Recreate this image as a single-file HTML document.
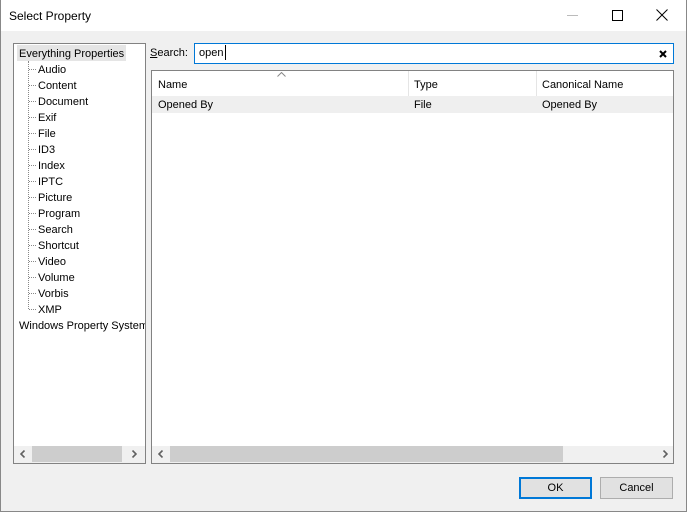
<!DOCTYPE html><html><head><style>
*{margin:0;padding:0;box-sizing:border-box}
body{width:687px;height:512px;background:#f0f0f0;font-family:"Liberation Sans",sans-serif;font-size:11px;color:#000;position:relative;overflow:hidden}
.a{position:absolute;white-space:nowrap}
.t{line-height:16px}
</style></head><body>
<div class="a" style="left:0;top:0;width:687px;height:31px;background:#fff"></div>
<div class="a" style="left:0;top:0;width:1px;height:512px;background:#888"></div>
<div class="a" style="left:686px;top:0;width:1px;height:512px;background:#888"></div>
<div class="a" style="left:0;top:511px;width:687px;height:1px;background:#888"></div>
<div class="a" style="left:9px;top:9px;font-size:12px">Select Property</div>
<div class="a" style="left:567px;top:15px;width:11px;height:1px;background:#bbb"></div>
<div class="a" style="left:612px;top:10px;width:11px;height:11px;border:1px solid #000"></div>
<svg class="a" style="left:656px;top:9px" width="12" height="12"><path d="M0.5 0.5L11.5 11.5M11.5 0.5L0.5 11.5" stroke="#000" stroke-width="1"/></svg>

<div class="a" style="left:13px;top:43px;width:133px;height:421px;background:#fff;border:1px solid #828282"></div>
<div class="a" style="left:17px;top:45px;width:109px;height:16px;background:#e5e5e5"></div>
<div class="a t" style="left:19px;top:46px">Everything Properties</div>
<div class="a" style="left:28px;top:61px;width:0;height:248px;border-left:1px dotted #888"></div>
<div id="tree"></div>
<div class="a t" style="left:19px;top:318px;width:126px;overflow:hidden">Windows Property System</div>
<div class="a" style="left:14px;top:446px;width:131px;height:17px;background:#f0f0f0"></div>
<div class="a" style="left:32px;top:446px;width:90px;height:16px;background:#cdcdcd"></div>
<svg class="a" style="left:20px;top:450px" width="6" height="8"><path d="M4.5 0.5L1 4L4.5 7.5" stroke="#606060" stroke-width="1.6" fill="none"/></svg>
<svg class="a" style="left:131px;top:450px" width="6" height="8"><path d="M1.5 0.5L5 4L1.5 7.5" stroke="#606060" stroke-width="1.6" fill="none"/></svg>

<div class="a" style="left:150px;top:47px"><u>S</u>earch:</div>
<div class="a" style="left:194px;top:43px;width:480px;height:21px;background:#fff;border:1px solid #0078d7"></div>
<div class="a" style="left:199px;top:47px">open</div>
<div class="a" style="left:225px;top:45px;width:1px;height:15px;background:#000"></div>
<svg class="a" style="left:659px;top:50px" width="8" height="8"><path d="M1 1L7 7M7 1L1 7" stroke="#000" stroke-width="2"/></svg>

<div class="a" style="left:151px;top:70px;width:523px;height:394px;background:#fff;border:1px solid #828282"></div>
<div class="a" style="left:408px;top:71px;width:1px;height:25px;background:#e5e5e5"></div>
<div class="a" style="left:536px;top:71px;width:1px;height:25px;background:#e5e5e5"></div>
<svg class="a" style="left:277px;top:72px" width="9" height="5"><path d="M0.5 4.5L4.5 0.5L8.5 4.5" stroke="#888" fill="none"/></svg>
<div class="a" style="left:158px;top:79px">Name</div>
<div class="a" style="left:414px;top:79px">Type</div>
<div class="a" style="left:542px;top:79px">Canonical Name</div>
<div class="a" style="left:152px;top:96px;width:521px;height:17px;background:#efefef"></div>
<div class="a" style="left:158px;top:99px">Opened By</div>
<div class="a" style="left:414px;top:99px">File</div>
<div class="a" style="left:542px;top:99px">Opened By</div>
<div class="a" style="left:152px;top:446px;width:521px;height:17px;background:#f0f0f0"></div>
<div class="a" style="left:170px;top:446px;width:393px;height:16px;background:#cdcdcd"></div>
<svg class="a" style="left:158px;top:450px" width="6" height="8"><path d="M4.5 0.5L1 4L4.5 7.5" stroke="#606060" stroke-width="1.6" fill="none"/></svg>
<svg class="a" style="left:662px;top:450px" width="6" height="8"><path d="M1.5 0.5L5 4L1.5 7.5" stroke="#606060" stroke-width="1.6" fill="none"/></svg>

<div class="a" style="left:519px;top:477px;width:73px;height:22px;background:#e1e1e1;border:2px solid #0078d7;text-align:center;line-height:19px">OK</div>
<div class="a" style="left:600px;top:477px;width:73px;height:22px;background:#e1e1e1;border:1px solid #adadad;text-align:center;line-height:21px">Cancel</div>
<script>
var n=["Audio","Content","Document","Exif","File","ID3","Index","IPTC","Picture","Program","Search","Shortcut","Video","Volume","Vorbis","XMP"],h="";
n.forEach(function(s,i){var y=61+i*16;h+='<div class="a" style="left:29px;top:'+(y+8)+'px;width:7px;border-top:1px dotted #888"></div><div class="a t" style="left:38px;top:'+(y+1)+'px">'+s+'</div>';});
document.getElementById("tree").innerHTML=h;
</script>
</body></html>
